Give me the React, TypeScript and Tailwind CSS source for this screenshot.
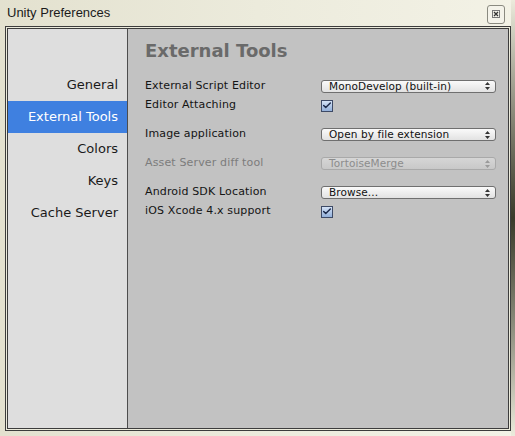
import { Check } from 'lucide-react';

const sections = ['General', 'External Tools', 'Colors', 'Keys', 'Cache Server'];

function Popup({ value, disabled }: { value: string; disabled?: boolean }) {
  return (
    <div
      className={
        'w-[175px] h-[13px] rounded-[3px] border flex items-center justify-between pl-[7px] pr-[5px] ' +
        (disabled
          ? 'border-[#a9a9a9] bg-gradient-to-b from-[#d6d6d6] to-[#c8c8c8] text-[#8c8c8c]'
          : 'border-[#6f6f6f] bg-gradient-to-b from-[#fafafa] to-[#e2e2e2] text-[#111]')
      }
    >
      <span className="text-[10.5px] leading-none tracking-[0.1px]">{value}</span>
      <svg width="5" height="8" viewBox="0 0 5 8" className={disabled ? 'text-[#9a9a9a]' : 'text-[#333]'}>
        <path d="M2.5 0 L5 3 H0 Z M0 5 H5 L2.5 8 Z" fill="currentColor" />
      </svg>
    </div>
  );
}

function Checkbox() {
  return (
    <div className="w-[12px] h-[12px] border border-[#3d4a66] bg-gradient-to-b from-[#d4e2f6] to-[#93b0da] flex items-center justify-center">
      <Check size={11} strokeWidth={3.5} className="text-[#1c2a4a]" />
    </div>
  );
}

function Row({
  label,
  disabled,
  tall,
  children,
}: {
  label: string;
  disabled?: boolean;
  tall?: boolean;
  children: React.ReactNode;
}) {
  return (
    <div className={(tall ? 'h-[20px]' : 'h-[19px]') + ' flex items-center'}>
      <div
        className={
          'w-[176px] text-[11px] tracking-[0.15px] ' + (disabled ? 'text-[#7c7c7c]' : 'text-[#141414]')
        }
      >
        {label}
      </div>
      {children}
    </div>
  );
}

export default function App() {
  return (
    <div
      className="w-[515px] h-[436px] bg-gradient-to-r from-[#e3e1cf] via-[#ecebdc] to-[#f3f2e6] flex overflow-hidden"
      style={{ fontFamily: '"DejaVu Sans", sans-serif' }}
    >
      <div className="w-[511px] flex flex-col">
        <div className="h-[26px] flex items-center justify-between pl-[7px] pr-[6px]">
          <span className="text-[13px] text-[#1a1a1a]" style={{ fontFamily: '"Liberation Sans", sans-serif' }}>
            Unity Preferences
          </span>
          <div className="w-[18px] h-[19px] mt-[2px] rounded-[3px] border border-[#8a8a80] bg-[#f4f3ea] flex items-center justify-center">
            <svg width="8" height="8" viewBox="0 0 8 8">
              <rect x="0.5" y="0.5" width="7" height="7" fill="none" stroke="#777" strokeWidth="1" />
              <path d="M2 2 L6 6 M6 2 L2 6" stroke="#333" strokeWidth="1.3" />
            </svg>
          </div>
        </div>
        <div className="ml-[5px] w-[506px] h-[405px] border border-[#3c3c3c] p-px bg-[#ecebdc]">
          <div className="w-full h-full border border-[#3c3c3c] flex">
            <div className="w-[119px] bg-[#dedede] pt-[40px] flex flex-col border-r border-[#4d4d4d] box-content">
              {sections.map((s) => (
                <div
                  key={s}
                  className={
                    'h-[32px] flex items-center justify-end pr-[9px] text-[13px] ' +
                    (s === 'External Tools' ? 'bg-[#3f80e0] text-white' : 'text-[#1a1a1a]')
                  }
                >
                  {s}
                </div>
              ))}
            </div>
            <div className="flex-1 bg-[#c2c2c2] pl-[17px] pt-[9px]">
              <div className="h-[24px] flex items-center text-[18px] font-bold text-[#6a6a6a]">
                External Tools
              </div>
              <div className="mt-[14px] flex flex-col">
                <Row label="External Script Editor" tall>
                  <Popup value="MonoDevelop (built-in)" />
                </Row>
                <Row label="Editor Attaching">
                  <Checkbox />
                </Row>
                <div className="h-[10px]" />
                <Row label="Image application">
                  <Popup value="Open by file extension" />
                </Row>
                <div className="h-[10px]" />
                <Row label="Asset Server diff tool" disabled>
                  <Popup value="TortoiseMerge" disabled />
                </Row>
                <div className="h-[10px]" />
                <Row label="Android SDK Location">
                  <Popup value="Browse..." />
                </Row>
                <Row label="iOS Xcode 4.x support">
                  <Checkbox />
                </Row>
              </div>
            </div>
          </div>
        </div>
      </div>
      <div className="flex-1 bg-gradient-to-b from-[#ecebdc] via-[#3a3a2a] to-[#ecebdc]" />
    </div>
  );
}
